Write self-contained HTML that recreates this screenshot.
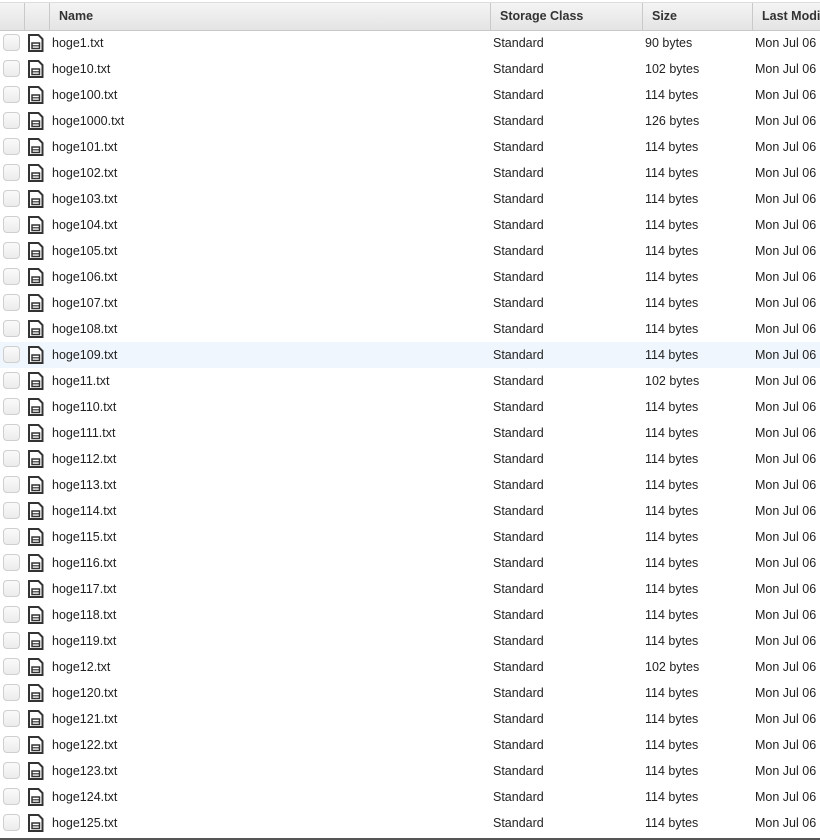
<!DOCTYPE html>
<html><head><style>
body{margin:0;width:820px;height:840px;overflow:hidden;background:#fff;font-family:"Liberation Sans",Arial,sans-serif;font-size:12.5px;color:#222;position:relative}
.hd{position:absolute;left:0;top:2px;width:820px;height:27px;background:linear-gradient(#f4f4f4,#e4e4e4);border-bottom:1px solid #c8c8c8;border-top:1px solid #ddd;overflow:hidden}
.hd div{position:absolute;top:0;height:27px;border-left:1px solid #c9c9c9;font-weight:bold;color:#333;line-height:26px;padding-left:9px;box-sizing:border-box;white-space:nowrap}
.r{position:absolute;left:0;width:820px;height:26px}
.r span{position:absolute;top:0;line-height:26px;white-space:nowrap}
.cb{position:absolute;left:3px;top:4px;width:17px;height:17px;border:1px solid #cfcfcf;border-radius:4px;background:linear-gradient(#fafafa,#ececec);box-sizing:border-box}
.ic{position:absolute;left:28px;top:4px}
.bot{position:absolute;left:0;top:838px;width:820px;height:2px;background:#555}
</style></head><body>
<div class="hd">
<div style="left:24px;width:25px"></div>
<div style="left:49px;width:441px">Name</div>
<div style="left:490px;width:152px">Storage Class</div>
<div style="left:642px;width:110px">Size</div>
<div style="left:752px;width:120px">Last Modified</div>
</div>
<div id="rows"></div>
<div class="bot"></div>
<script>
var n=[["hoge1.txt","90"],["hoge10.txt","102"],["hoge100.txt","114"],["hoge1000.txt","126"]];
for(var i=101;i<=110;i++)n.push(["hoge"+i+".txt","114"]);
n.splice(13,0,["hoge11.txt","102"]);
for(var i=111;i<=119;i++)n.push(["hoge"+i+".txt","114"]);
n.push(["hoge12.txt","102"]);
for(var i=120;i<=125;i++)n.push(["hoge"+i+".txt","114"]);
var h="";
n.forEach(function(e,k){
var y=30+26*k;
h+='<div class="r" style="top:'+y+'px;'+(e[0]=="hoge109.txt"?'background:#eff6fd':'')+'"><div class="cb"></div>'+
'<svg class="ic" width="16" height="18" viewBox="0 0 16 18"><path d="M1 1h9.5l4 4v12h-13.5z" fill="#fff" stroke="#333" stroke-width="2" stroke-linejoin="miter"/><rect x="4" y="9" width="7.5" height="5.5" fill="none" stroke="#333" stroke-width="1.5"/><rect x="4" y="11.2" width="7.5" height="1.2" fill="#333"/></svg>'+
'<span style="left:52px">'+e[0]+'</span><span style="left:493px">Standard</span><span style="left:645px">'+e[1]+' bytes</span><span style="left:755px">Mon Jul 06 15:</span></div>';
});
document.getElementById("rows").innerHTML=h;
</script>
</body></html>
